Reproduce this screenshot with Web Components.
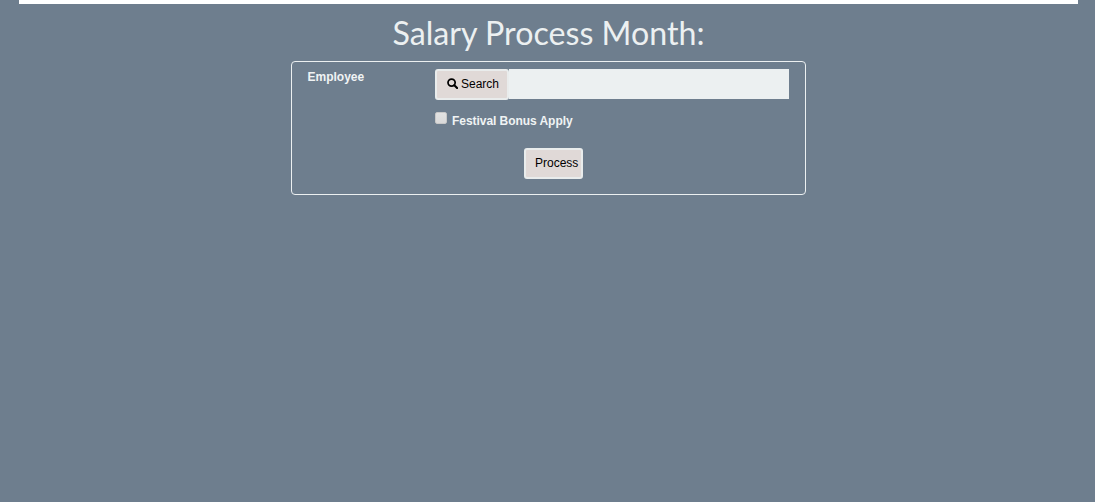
<!DOCTYPE html>
<html>
<head>
<meta charset="utf-8">
<title>Salary Process</title>
<style>
    html, body{
        margin: 0;
        padding: 0;
        height: 100%;
        background: #6e7e8e;
    }
</style>
</head>
<body>
<salary-page>
    <salary-panel>
        <span slot="label">Employee</span>
    </salary-panel>
</salary-page>
<script>
class SalaryPage extends HTMLElement{
    constructor(){
        super()
        this.attachShadow({mode: 'open'})
        this.shadowRoot.innerHTML = `
            <style>
                :host{
                    display: block;
                    padding: 0 17px 0 19px;
                }
                #bar{
                    height: 4px;
                    background: #fff;
                }
                h1{
                    margin: 0;
                    padding-top: 9px;
                    height: 48px;
                    font: 400 32.2px/40px Lato, sans-serif;
                    text-align: center;
                    color: #ecf0f1;
                }
                main{
                    display: flex;
                    justify-content: center;
                }
            </style>
            <div id="bar"></div>
            <h1>Salary Process Month:</h1>
            <main><slot></slot></main>
        `
    }
}

class SalaryButton extends HTMLElement{
    constructor(){
        super()
        this.attachShadow({mode: 'open'})
        this.shadowRoot.innerHTML = `
            <style>
                :host{
                    display: inline-flex;
                    align-items: center;
                    box-sizing: border-box;
                    height: 31px;
                    padding: 0 4px 2px 9px;
                    background: #e0d9d7;
                    border: 2px solid #e9ecec;
                    border-radius: 3px;
                    font: 12px "Liberation Sans", Arial, sans-serif;
                    color: #000;
                    cursor: pointer;
                }
                ::slotted(svg){
                    margin-left: 1px;
                    margin-right: 3px;
                }
            </style>
            <slot></slot>
        `
    }
}

class SalaryPanel extends HTMLElement{
    constructor(){
        super()
        this.attachShadow({mode: 'open'})
        this.shadowRoot.innerHTML = `
            <style>
                :host{
                    display: grid;
                    grid-template-columns: 127px 354px;
                    box-sizing: border-box;
                    width: 515px;
                    height: 134px;
                    padding: 7px 16px 0;
                    border: 1px solid #ecf0f1;
                    border-radius: 4px;
                    font: bold 12px "Liberation Sans", Arial, sans-serif;
                    color: #f0f3f4;
                }
                #label{
                    margin-left: -0.5px;
                    padding-top: 1px;
                    line-height: 14px;
                }
                #search{
                    display: flex;
                    align-items: flex-start;
                    height: 31px;
                }
                #search salary-button{
                    width: 74px;
                    flex: none;
                }
                input[type=text]{
                    flex: 1;
                    box-sizing: border-box;
                    height: 30px;
                    border: 0;
                    padding: 0 8px;
                    background: #ecf0f1;
                }
                #bonus{
                    display: flex;
                    align-items: flex-start;
                    height: 16px;
                    margin-top: 12px;
                }
                #box{
                    box-sizing: border-box;
                    width: 12px;
                    height: 12px;
                    border: 1px solid #c8c8c8;
                    border-radius: 2px;
                    background: linear-gradient(#e2e2e2, #dadada);
                    margin-right: 5px;
                }
                #bonus span{
                    line-height: 14px;
                    margin-top: 2px;
                    letter-spacing: -0.05px;
                }
                #actions{
                    margin: 20px 0 0 89px;
                }
                #process{
                    width: 59px;
                    font-weight: normal;
                }
            </style>
            <div id="label"><slot name="label"></slot></div>
            <div>
                <div id="search">
                    <salary-button>
                        <svg width="11" height="11" viewBox="0 0 12 12" fill="none" stroke="#000" stroke-width="1.9">
                            <circle cx="5" cy="5" r="3.9"/>
                            <path d="M8 8 L11 11" stroke-width="2.3" stroke-linecap="round"/>
                        </svg>
                        Search
                    </salary-button>
                    <input type="text">
                </div>
                <div id="bonus">
                    <div id="box" role="checkbox"></div>
                    <span>Festival Bonus Apply</span>
                </div>
                <div id="actions">
                    <salary-button id="process">Process</salary-button>
                </div>
            </div>
        `
    }
}

customElements.define('salary-page', SalaryPage)
customElements.define('salary-button', SalaryButton)
customElements.define('salary-panel', SalaryPanel)
</script>
</body>
</html>
